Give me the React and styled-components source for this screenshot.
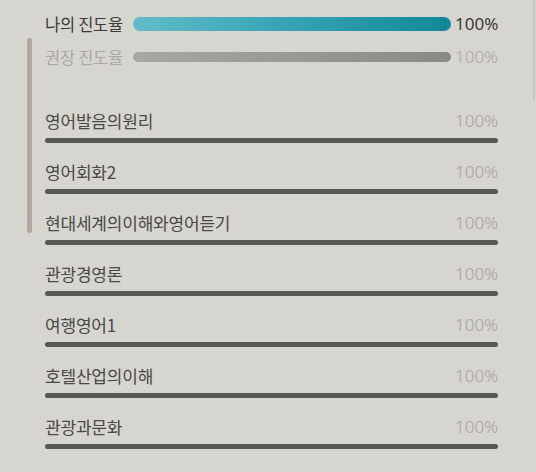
import React from "react";
import styled, { createGlobalStyle } from "styled-components";

const Global = createGlobalStyle`
  html, body {
    margin: 0;
    padding: 0;
    background: #d6d5cf;
  }
  body {
    font-family: "Noto Sans CJK KR", "Noto Sans", sans-serif;
    width: 536px;
    height: 472px;
    overflow: hidden;
  }
`;

const Page = styled.div`
  position: relative;
  display: flex;
  width: 536px;
  height: 472px;
  background: #d6d5cf;
`;

const Gutter = styled.div`
  width: 18px;
  padding-left: 27px;
  flex: none;
`;

const SideBar = styled.div`
  margin-top: 38px;
  width: 5px;
  height: 195px;
  border-radius: 3px;
  background: #b3a6a0;
`;

const Content = styled.div`
  width: 453px;
  display: flex;
  flex-direction: column;
  padding-top: 13px;
`;

const Summary = styled.div`
  display: flex;
  flex-direction: column;
  gap: 11px;
`;

const SummaryRow = styled.div`
  display: flex;
  align-items: center;
  height: 22px;
`;

const SummaryLabel = styled.span`
  width: 88px;
  flex: none;
  font-size: 16.5px;
  line-height: 22px;
  letter-spacing: -0.3px;
  color: ${(p) => (p.$muted ? "#aaa9a3" : "#3b3a37")};
  white-space: nowrap;
`;

const Track = styled.div`
  width: 318px;
  flex: none;
  height: ${(p) => p.$h}px;
  border-radius: ${(p) => p.$h / 2}px;
  background: ${(p) =>
    p.$teal
      ? "linear-gradient(90deg, #62bcc8 0%, #3aa5b5 45%, #118899 100%)"
      : "linear-gradient(90deg, #a8a7a1 0%, #999892 50%, #8a8983 100%)"};
`;

const Percent = styled.span`
  font-family: "Noto Sans", "Open Sans", sans-serif;
  font-weight: 300;
  font-size: 17px;
  line-height: 22px;
  white-space: nowrap;
`;

const SummaryValue = styled(Percent)`
  margin-left: 4px;
  color: ${(p) => (p.$muted ? "#aaa9a3" : "#3b3a37")};
  font-weight: ${(p) => (p.$muted ? 300 : 400)};
`;

const List = styled.div`
  margin-top: 42px;
  display: flex;
  flex-direction: column;
  gap: 18px;
`;

const Item = styled.div`
  display: flex;
  flex-direction: column;
  gap: 6px;
`;

const ItemHead = styled.div`
  display: flex;
  justify-content: space-between;
  align-items: center;
  height: 22px;
`;

const ItemTitle = styled.span`
  font-size: 17px;
  line-height: 22px;
  letter-spacing: -0.2px;
  color: #4a4945;
`;

const ItemValue = styled(Percent)`
  color: #a4a29c;
`;

const ItemBar = styled.div`
  height: 5px;
  border-radius: 3px;
  background: #585752;
`;

const Scroll = styled.div`
  position: absolute;
  right: 1px;
  top: 0;
  width: 2px;
  height: 100px;
  background: #c8c7c1;
`;

const courses = [
  "영어발음의원리",
  "영어회화2",
  "현대세계의이해와영어듣기",
  "관광경영론",
  "여행영어1",
  "호텔산업의이해",
  "관광과문화",
];

export default function App() {
  return (
    <>
      <Global />
      <Page>
        <Gutter>
          <SideBar />
        </Gutter>
        <Content>
          <Summary>
            <SummaryRow>
              <SummaryLabel>나의 진도율</SummaryLabel>
              <Track $teal $h={14} />
              <SummaryValue>100%</SummaryValue>
            </SummaryRow>
            <SummaryRow>
              <SummaryLabel $muted>권장 진도율</SummaryLabel>
              <Track $h={10} />
              <SummaryValue $muted>100%</SummaryValue>
            </SummaryRow>
          </Summary>
          <List>
            {courses.map((c) => (
              <Item key={c}>
                <ItemHead>
                  <ItemTitle>{c}</ItemTitle>
                  <ItemValue>100%</ItemValue>
                </ItemHead>
                <ItemBar />
              </Item>
            ))}
          </List>
        </Content>
        <Scroll />
      </Page>
    </>
  );
}
